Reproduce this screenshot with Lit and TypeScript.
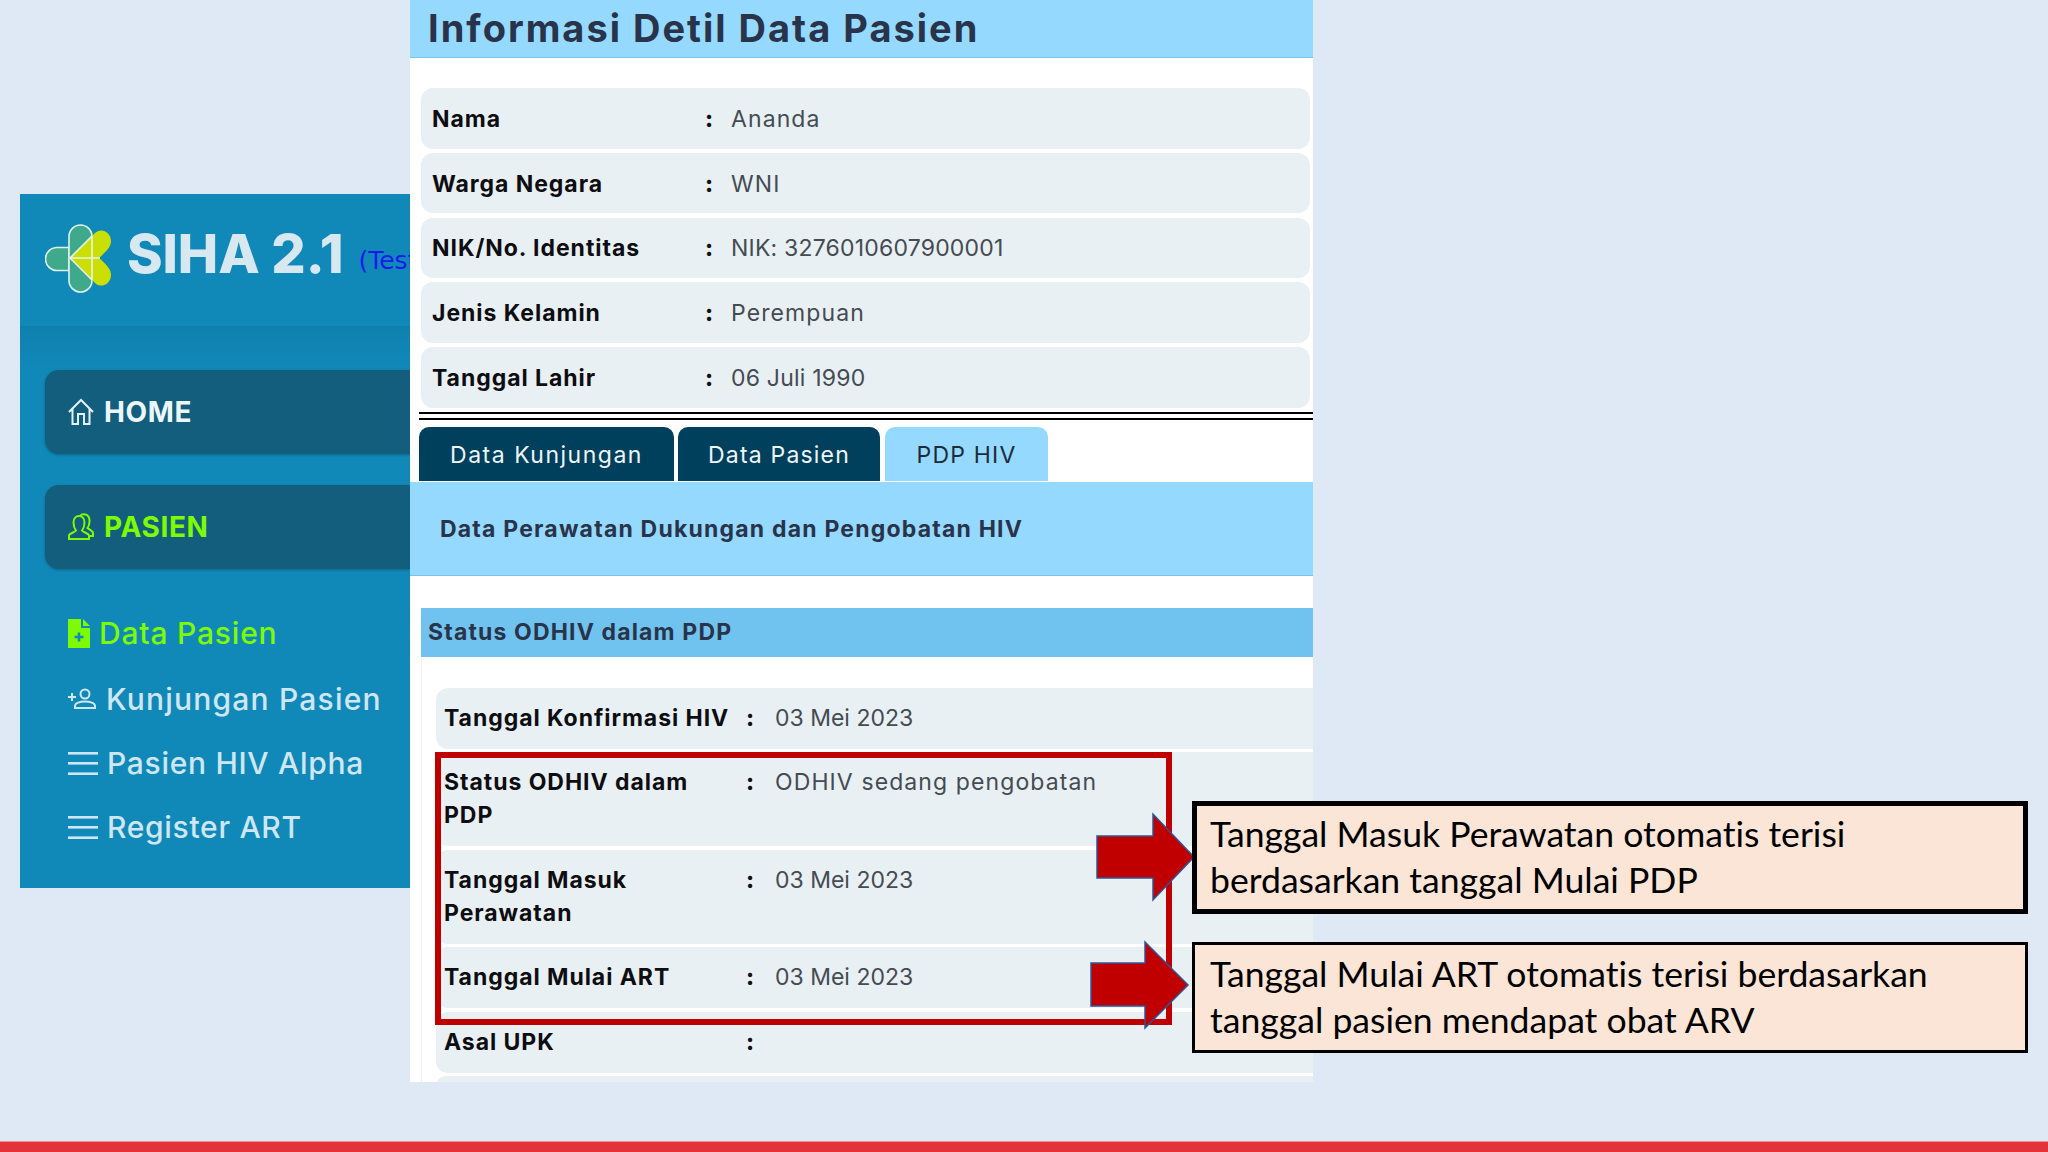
import { LitElement, html, css, svg } from "lit";
import { customElement } from "lit/decorators.js";

const SANS = css`"Inter", "Open Sans", sans-serif`;

@customElement("app-root")
export class AppRoot extends LitElement {
  static styles = css`
    :host { display: block; width: 2048px; height: 1152px; position: relative; overflow: hidden; background: #dee9f5; font-family: ${SANS}; }
    .page { display: flex; flex-direction: column; height: 1152px; }
    .content { flex: 1; display: flex; align-items: flex-start; padding-left: 20px; min-height: 0; }
    .bar { height: 11px; background: #e4323b; border-top: 1px solid #ee8d90; box-sizing: border-box; }

    .side { width: 390px; height: 694px; margin-top: 194px; background: #1189b8; overflow: hidden; flex: none; }
    .brand { height: 132px; display: flex; align-items: flex-start; white-space: nowrap; box-sizing: border-box; padding: 30px 0 0 25px; }
    .logo { width: 68px; height: 70px; flex: none; }
    .siha { font-size: 54px; font-weight: 800; color: #d7e8f1; margin: -5px 0 0 14px; line-height: 70px; letter-spacing: -0.1px; }
    .test { font-size: 25px; color: #1a1af0; margin-left: 15px; line-height: 70px; padding-top: 2px; font-family: "DejaVu Sans", sans-serif; }
    .sidebody { background: linear-gradient(#0f80ad, #1189b8 44px); padding: 44px 0 0 25px; height: 518px; }
    .nav { height: 84px; border-radius: 14px 0 0 14px; background: #125e7c; display: flex; align-items: center; gap: 10px; padding-left: 23px; box-sizing: border-box; font-size: 28px; font-weight: 700; color: #ecf6fb; margin-bottom: 31px; letter-spacing: 0.6px; box-shadow: 0 1px 3px #0d668c; }
    .nav.on { color: #7dfb05; margin-bottom: 32px; }
    .nav svg { width: 26px; height: 28px; flex: none; }
    .item { height: 64px; display: flex; align-items: center; gap: 9px; padding-left: 23px; font-size: 30px; font-weight: 500; color: #cfe6f3; letter-spacing: 0.7px; white-space: nowrap; }
    .item.on { color: #7dfb05; margin-bottom: 2px; letter-spacing: 0.8px; }
    .item.wide { letter-spacing: 1.2px; gap: 10px; }
    .item svg { flex: none; }

    .main { width: 903px; height: 1082px; background: #fff; overflow: hidden; flex: none; display: flex; flex-direction: column; color: #222; }
    .title { height: 57px; flex: none; background: #95d9ff; border-bottom: 1px solid #7fc2ea; padding-left: 18px; font-size: 38px; font-weight: 700; line-height: 57px; color: #29334a; letter-spacing: 2px; white-space: nowrap; }
    .info { margin: 30px 3px 0 11px; display: flex; flex-direction: column; gap: 4.3px; }
    .irow { height: 60.5px; display: grid; grid-template-columns: 273px 26px 1fr; padding: 1px 0 0 11px; box-sizing: border-box; align-items: center; border-radius: 12px; background: #e9f0f3; font-size: 23px; }
    .lab { font-weight: 700; color: #0d0d12; letter-spacing: 0.95px; }
    .colon { font-weight: 800; color: #111; }
    .val { color: #444b52; letter-spacing: 1.1px; }
    .val.num { letter-spacing: 0.2px; }
    .rule { margin: 4px 0 0 9px; height: 2px; border-top: 2px solid #000; border-bottom: 2px solid #000; padding: 1px 0; flex: none; }
    .tabs { display: flex; gap: 4px; margin: 7px 0 0 9px; flex: none; }
    .tab { height: 54px; line-height: 56px; text-align: center; border-radius: 10px 10px 0 0; background: #00405c; color: #eef6fa; font-size: 23px; letter-spacing: 1.2px; white-space: nowrap; }
    .t1 { width: 255px; letter-spacing: 1.5px; }
    .t2 { width: 202px; }
    .t3 { width: 163px; margin-left: 1px; }
    .tab.on { background: #95d9ff; color: #1d2b3a; }
    .banner { height: 93px; flex: none; margin-top: 1px; background: #95d9ff; border-bottom: 1px solid #7cc1e8; padding-left: 30px; line-height: 95px; font-size: 23px; font-weight: 700; color: #29334a; letter-spacing: 1.2px; white-space: nowrap; }
    .sec { height: 49px; flex: none; margin: 32px 0 0 11px; background: #70c3ee; padding-left: 7px; line-height: 49px; font-size: 23px; font-weight: 700; color: #29334a; letter-spacing: 1.15px; }
    .list { margin-left: 11px; padding: 31px 0 0 14px; display: flex; flex-direction: column; gap: 3.5px; border-left: 1px solid #eef1f3; }
    .srow { display: grid; grid-template-columns: 302px 29px 1fr; padding: 14px 0 14px 8px; line-height: 33px; background: #e9f0f3; border-radius: 12px 0 0 12px; font-size: 23px; flex: none; }
    .srow .lab { max-width: 292px; }
    .srow .val.num { letter-spacing: 0; }
    .srow.empty { height: 20px; padding: 0; }

    .redbox { position: absolute; left: 435px; top: 752px; width: 737px; height: 273px; box-sizing: border-box; border: 6px solid #c00000; }
    .arrow { position: absolute; left: 1080px; top: 800px; width: 130px; height: 240px; overflow: visible; }
    .call { position: absolute; left: 1192px; width: 836px; box-sizing: border-box; background: #fbe5d6; border: 5px solid #000; padding: 0 0 2px 13px; font-family: "Lato", sans-serif; font-size: 35.6px; font-variant-ligatures: none; line-height: 46px; color: #000; white-space: nowrap; display: flex; flex-direction: column; justify-content: center; }
    .c1 { top: 801px; height: 113px; }
    .c2 { top: 942px; height: 111px; border-width: 3px; padding-left: 15px; }
  `;

  private logo() {
    return html`<svg class="logo" viewBox="45 224 68 70">
      <g stroke="#dff3ee" stroke-width="1.6">
        <path d="M69 247.500H57a11 11 0 0 0 0 23H69Z" fill="#3fa98c"/>
        <rect x="69" y="225" width="23" height="67" rx="11.500" fill="#3fa98c"/>
      </g>
      <path d="M70 258 95 233C101 227 111 232 111 241 111 246 108 250 99 258 108 266 111 270 111 275 111 284 101 289 95 283Z" fill="#cbdf05"/>
      <path d="M70 258H100M92 236V280M70 258 92 236M70 258 92 280" fill="none" stroke="#e6f5ec" stroke-width="1.600"/>
    </svg>`;
  }

  private rows(items: [string, string, boolean][]) {
    return items.map(([a, b, n]) => html`<div class="irow"><span class="lab">${a}</span><span class="colon">:</span><span class="val ${n ? "num" : ""}">${b}</span></div>`);
  }

  private srows(items: [string, string, boolean][]) {
    return items.map(([a, b, n]) => html`<div class="srow"><span class="lab">${a}</span><span class="colon">:</span><span class="val ${n ? "num" : ""}">${b}</span></div>`);
  }

  render() {
    return html`
      <div class="page">
        <div class="content">
          <aside class="side">
            <div class="brand">${this.logo()}<span class="siha">SIHA 2.1</span><span class="test">(Test</span></div>
            <div class="sidebody">
              <div class="nav">
                <svg viewBox="0 0 26 28" fill="none" stroke="#e3f1f8" stroke-width="2"><path d="M1 14 13 2l12 12M4.500 11v15h5.500V16h6v10h5.500V11"/></svg>
                HOME
              </div>
              <div class="nav on">
                <svg viewBox="0 0 26 28" fill="none" stroke="#7dfb05" stroke-width="2"><path d="M1 26v-3.500c0-2 5.500-3 7-5C6 15 5.500 12 5.500 9.500c0-4 2.500-6.500 5.500-6.500s5.500 2.500 5.500 6.500c0 2.500-.5 5.500-2.500 8 1.500 2 7 3 7 5V26ZM12.500 2.500C14 .500 21 .500 21.500 7c.2 3-.5 6-2 8 1.500 1.500 5 2.500 5.500 5v3h-3"/></svg>
                PASIEN
              </div>
              <div class="item on">
                <svg width="22" height="29" viewBox="0 0 22 29"><path d="M0 0H13V9H22V29H0Z" fill="#7dfb05"/><path d="M15 0 22 7H15Z" fill="#7dfb05"/><path d="M11 13.500v9M6.500 18h9" stroke="#1189b8" stroke-width="2.500"/></svg>
                Data Pasien
              </div>
              <div class="item wide">
                <svg width="28" height="22" viewBox="0 0 28 22" fill="none" stroke="#cfe6f3" stroke-width="2"><circle cx="17" cy="6" r="4.500"/><path d="M7 20v-2c0-3 5-4.500 10-4.500s10 1.500 10 4.500v2Z"/><path d="M0 9h8M4 5v8"/></svg>
                Kunjungan Pasien
              </div>
              <div class="item">
                <svg width="30" height="23" viewBox="0 0 30 23" fill="#cfe6f3"><rect width="30" height="2.600"/><rect y="10" width="30" height="2.600"/><rect y="20.400" width="30" height="2.600"/></svg>
                Pasien HIV Alpha
              </div>
              <div class="item">
                <svg width="30" height="23" viewBox="0 0 30 23" fill="#cfe6f3"><rect width="30" height="2.600"/><rect y="10" width="30" height="2.600"/><rect y="20.400" width="30" height="2.600"/></svg>
                Register ART
              </div>
            </div>
          </aside>
          <main class="main">
            <div class="title">Informasi Detil Data Pasien</div>
            <div class="info">
              ${this.rows([
                ["Nama", "Ananda", false],
                ["Warga Negara", "WNI", false],
                ["NIK/No. Identitas", "NIK: 3276010607900001", true],
                ["Jenis Kelamin", "Perempuan", false],
                ["Tanggal Lahir", "06 Juli 1990", true],
              ])}
            </div>
            <div class="rule"></div>
            <div class="tabs">
              <div class="tab t1">Data Kunjungan</div>
              <div class="tab t2">Data Pasien</div>
              <div class="tab t3 on">PDP HIV</div>
            </div>
            <div class="banner">Data Perawatan Dukungan dan Pengobatan HIV</div>
            <div class="sec">Status ODHIV dalam PDP</div>
            <div class="list">
              ${this.srows([
                ["Tanggal Konfirmasi HIV", "03 Mei 2023", true],
                ["Status ODHIV dalam PDP", "ODHIV sedang pengobatan", false],
                ["Tanggal Masuk Perawatan", "03 Mei 2023", true],
                ["Tanggal Mulai ART", "03 Mei 2023", true],
                ["Asal UPK", "", false],
              ])}
              <div class="srow empty"></div>
            </div>
          </main>
        </div>
        <div class="bar"></div>
      </div>
      <div class="redbox"></div>
      <svg class="arrow" viewBox="1080 800 130 240">
        ${svg`<path d="M1097 836H1153V814L1194 857L1153 900V878H1097Z" fill="#c00000" stroke="#2f5597" stroke-width="1.500"/>
        <path d="M1091 963H1145V942L1188 985L1145 1028V1006H1091Z" fill="#c00000" stroke="#2f5597" stroke-width="1.500"/>`}
      </svg>
      <div class="call c1"><div>Tanggal Masuk Perawatan otomatis terisi</div><div>berdasarkan tanggal Mulai PDP</div></div>
      <div class="call c2"><div>Tanggal Mulai ART otomatis terisi berdasarkan</div><div>tanggal pasien mendapat obat ARV</div></div>
    `;
  }
}
